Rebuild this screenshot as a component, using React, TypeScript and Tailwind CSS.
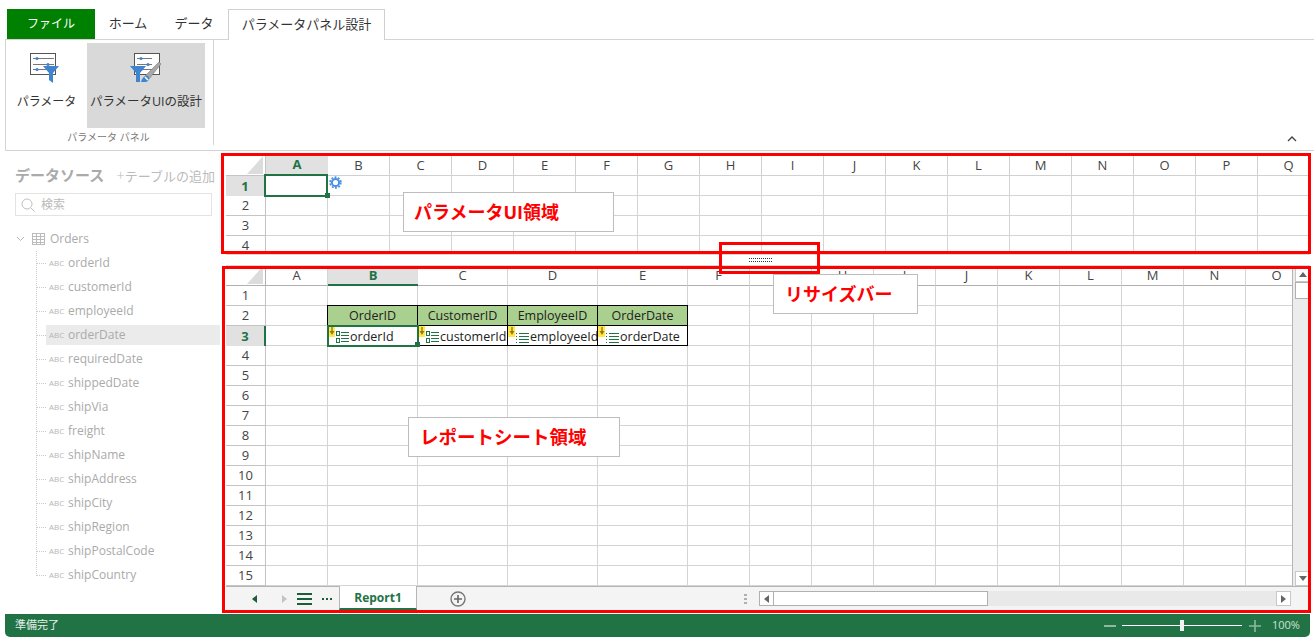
import React from "react";

const topCols = ["A","B","C","D","E","F","G","H","I","J","K","L","M","N","O","P","Q"];
const bottomCols = ["A","B","C","D","E","F","G","H","I","J","K","L","M","N","O"];
const fields = ["orderId","customerId","employeeId","orderDate","requiredDate","shippedDate","shipVia","freight","shipName","shipAddress","shipCity","shipRegion","shipPostalCode","shipCountry"];
const headers: Record<string,string> = { B:"OrderID", C:"CustomerID", D:"EmployeeID", E:"OrderDate" };
const binds: Record<string,[string,boolean]> = { B:["orderId",true], C:["customerId",true], D:["employeeId",false], E:["orderDate",false] };

function Corner() {
  return (
    <svg width="16" height="18" viewBox="0 0 16 18" className="absolute right-[2px] bottom-[1px]">
      <polygon points="16,0 16,18 0,18" fill="#dcdcdc" />
    </svg>
  );
}

function PanelIcon({ flip }: { flip?: boolean }) {
  return (
    <svg width="36" height="32" viewBox="0 0 36 32">
      <rect x={flip ? 6.5 : 1.5} y="1.5" width="25" height="21" fill="#fff" stroke="#555" />
      <g stroke="#777">
        <path d={flip ? "M9 6.5h15M9 12.5h15M9 17.5h15" : "M4 6.5h21M4 12.5h21M4 17.5h21"} />
      </g>
      <g fill="#3f84cf">
        <circle cx={flip ? 13 : 8} cy="6.5" r="1.6" />
        <circle cx={flip ? 20 : 19} cy="12.5" r="1.6" />
        <circle cx={flip ? 13 : 8} cy="17.5" r="1.6" />
      </g>
      {flip ? (
        <>
          <polygon points="2,14 18,14 12,21 12,30 8,30 8,21" fill="#3f84cf" />
          <path d="M17 24 L31 10 L33 12 L21 27 Z" fill="#a8a8a8" stroke="#777" strokeWidth="0.6" />
          <path d="M13 30 C14 26 17 23 20 24 C22 26 21 29 18 30 Z" fill="#3f84cf" />
          <path d="M17 25 L20 28" stroke="#fff" strokeWidth="1.5" />
        </>
      ) : (
        <polygon points="14,14 30,14 24,21 24,31 20,28 20,21" fill="#3f84cf" />
      )}
    </svg>
  );
}

function FieldIcon({ squares }: { squares: boolean }) {
  return squares ? (
    <svg width="13" height="12" viewBox="0 0 13 12" className="shrink-0">
      <g fill="none" stroke="#217346">
        <rect x="0.5" y="0.5" width="3" height="4" />
        <rect x="0.5" y="7.5" width="3" height="4" />
        <path d="M5 1.5h8M5 4.5h8M5 7.5h8M5 10.5h8" />
      </g>
    </svg>
  ) : (
    <svg width="13" height="12" viewBox="0 0 13 12" className="shrink-0 mt-[1px]">
      <g stroke="#217346">
        <path d="M3 1.5h10M3 4.5h10M3 7.5h10M3 10.5h10" />
        <path d="M0 1.5h2M0 4.5h2M0 7.5h2M0 10.5h2" strokeDasharray="1 1" />
      </g>
    </svg>
  );
}

function BindTag() {
  return (
    <span className="absolute left-0 top-0 w-[7px] h-[11px] bg-[#ffe84d] flex justify-center">
      <svg width="6" height="10" viewBox="0 0 6 10">
        <path d="M3 1v5" stroke="#9a7a10" strokeWidth="1.4" />
        <polygon points="0.5,5 5.5,5 3,9" fill="#9a7a10" />
      </svg>
    </span>
  );
}

function TopSheet() {
  return (
    <div className="w-[1082px] h-[98px] overflow-hidden">
      <div className="grid grid-cols-[40px_repeat(17,62px)] auto-rows-[20px] w-[1094px]">
        <div className="relative border-r border-b border-[#c4c4c4]"><Corner /></div>
        {topCols.map((c) => (
          <div key={c} className={c === "A"
            ? "flex items-center justify-center bg-[#e1e1e1] border-b-2 border-[#217346] text-[#217346] font-bold text-[13px]"
            : "flex items-center justify-center border-r border-b border-[#d0d0d0] text-[#444] text-[13px]"}>{c}</div>
        ))}
        {[1,2,3,4].map((r) => (
          <React.Fragment key={r}>
            <div className={r === 1
              ? "flex items-center justify-center pt-[1px] bg-[#e1e1e1] border-r-2 border-[#217346] text-[#217346] font-bold text-[13px]"
              : "flex items-center justify-center pt-[1px] border-r border-b border-[#c4c4c4] text-[#444] text-[13px]"}>{r}</div>
            {topCols.map((c) => (
              <div key={c} className="relative border-r border-b border-[#d4d4d4]">
                {r === 1 && c === "A" && (
                  <>
                    <div className="absolute -left-[2px] -top-[2px] w-[64px] h-[23px] border-2 border-[#217346] z-10" />
                    <div className="absolute left-[59px] top-[17px] w-[5px] h-[5px] bg-[#217346] z-10" />
                  </>
                )}
                {r === 1 && c === "B" && (
                  <svg width="13" height="13" viewBox="0 0 13 13" className="absolute left-[1px] top-0">
                    <circle cx="6.5" cy="6.5" r="3.6" fill="none" stroke="#4a90e2" strokeWidth="2" />
                    <circle cx="6.5" cy="6.5" r="5.4" fill="none" stroke="#4a90e2" strokeWidth="1.6" strokeDasharray="2 1.4" />
                  </svg>
                )}
              </div>
            ))}
          </React.Fragment>
        ))}
      </div>
    </div>
  );
}

function BottomSheet() {
  const rows = Array.from({ length: 15 }, (_, i) => i + 1);
  return (
    <div className="relative h-[320px] w-[1084px] overflow-hidden flex">
      <div className="w-[1067px] overflow-hidden border-r border-[#b5b5b5]">
        <div className="grid grid-cols-[40px_62px_repeat(4,90px)_repeat(10,62px)] auto-rows-[20px] w-[1100px]">
          <div className="relative border-r border-b border-[#b0b0b0]"><Corner /></div>
          {bottomCols.map((c) => (
            <div key={c} className={c === "B"
              ? "flex items-center justify-center pt-[1px] bg-[#e1e1e1] border-b-2 border-[#217346] text-[#217346] font-bold text-[13px]"
              : "flex items-center justify-center pt-[1px] border-r border-[#d6d6d6] border-b-[#b0b0b0] border-b text-[#444] text-[13px]"}>{c}</div>
          ))}
          {rows.map((r) => (
            <React.Fragment key={r}>
              <div className={r === 3
                ? "flex items-center justify-center pt-[1px] bg-[#e1e1e1] border-r-2 border-[#217346] text-[#217346] font-bold text-[13px]"
                : "flex items-center justify-center pt-[1px] border-r border-b border-[#c4c4c4] text-[#444] text-[13px]"}>{r}</div>
              {bottomCols.map((c) => {
                const isHead = r === 2 && headers[c];
                const isBind = r === 3 && binds[c];
                if (isHead) {
                  return (
                    <div key={c} className="flex items-center justify-center bg-[#a9d08e] border border-black -ml-px -mt-px w-[91px] h-[21px] text-[12.5px] text-[#222] pt-[2px]">{headers[c]}</div>
                  );
                }
                if (isBind) {
                  return (
                    <div key={c} className="relative flex items-center pl-[8px] pt-[3px] gap-[1px] bg-white border border-black -ml-px -mt-px w-[91px] h-[21px] text-[12.5px] text-[#222] overflow-visible whitespace-nowrap">
                      <BindTag />
                      <FieldIcon squares={binds[c][1]} />
                      <span className="block overflow-hidden">{binds[c][0]}</span>
                      {c === "B" && (
                        <>
                          <div className="absolute -left-px -top-px w-[92px] h-[22px] border-2 border-[#217346] z-10" />
                          <div className="absolute left-[87px] top-[16px] w-[5px] h-[5px] bg-[#217346] z-10" />
                        </>
                      )}
                    </div>
                  );
                }
                return <div key={c} className="border-r border-b border-[#d4d4d4]" />;
              })}
            </React.Fragment>
          ))}
        </div>
      </div>
      <div className="w-[17px] bg-[#ececec] flex flex-col items-center pl-[2px]">
        <div className="w-[15px] h-[16px] bg-white border border-[#c8c8c8] flex items-center justify-center">
          <svg width="8" height="5" viewBox="0 0 8 5"><polygon points="4,0 8,5 0,5" fill="#666" /></svg>
        </div>
        <div className="w-[15px] h-[17px] bg-white border border-[#b0b0b0]" />
        <div className="flex-1" />
        <div className="w-[15px] h-[15px] bg-white border border-[#c8c8c8] flex items-center justify-center">
          <svg width="8" height="5" viewBox="0 0 8 5"><polygon points="0,0 8,0 4,5" fill="#666" /></svg>
        </div>
      </div>
    </div>
  );
}

function SheetTabs() {
  return (
    <div className="h-[24px] w-[1084px] bg-[#f4f4f4] border-t border-[#b5b5b5] flex items-center relative">
      <svg width="6" height="8" viewBox="0 0 6 8" className="ml-[26px]"><polygon points="5,0 5,8 0,4" fill="#1b5e3a" /></svg>
      <svg width="6" height="8" viewBox="0 0 6 8" className="ml-[23px]"><polygon points="1,0 1,8 6,4" fill="#c4c4c4" /></svg>
      <div className="ml-[10px] w-[15px] flex flex-col gap-[3px]">
        <div className="h-[2px] bg-[#1b5e3a]" /><div className="h-[2px] bg-[#1b5e3a]" /><div className="h-[2px] bg-[#1b5e3a]" />
      </div>
      <div className="ml-[9px] w-[12px] flex justify-center gap-[2px]">
        <div className="w-[2px] h-[2px] bg-[#1b5e3a]" /><div className="w-[2px] h-[2px] bg-[#1b5e3a]" /><div className="w-[2px] h-[2px] bg-[#1b5e3a]" />
      </div>
      <div className="ml-[6px] w-[78px] h-[24px] -mt-px bg-white border-x border-[#b5b5b5] border-b-2 border-b-[#217346] flex items-center justify-center text-[12px] font-bold text-[#217346] pt-[1px]">Report1</div>
      <svg width="16" height="16" viewBox="0 0 16 16" className="ml-[33px]">
        <circle cx="8" cy="8" r="7" fill="none" stroke="#777" strokeWidth="1.4" />
        <path d="M8 4v8M4 8h8" stroke="#666" strokeWidth="1.6" />
      </svg>
      <div className="ml-[278px] w-[3px] flex flex-col gap-[2px]">
        <div className="h-[2px] bg-[#b0b0b0]" /><div className="h-[2px] bg-[#b0b0b0]" /><div className="h-[2px] bg-[#b0b0b0]" />
      </div>
      <div className="ml-[12px] w-[532px] h-[15px] bg-[#e9e9e9] flex">
        <div className="w-[15px] h-[15px] bg-white border border-[#b0b0b0] flex items-center justify-center">
          <svg width="5" height="8" viewBox="0 0 5 8"><polygon points="5,0 5,8 0,4" fill="#666" /></svg>
        </div>
        <div className="w-[214px] h-[15px] bg-white border border-[#b0b0b0] border-l-0" />
        <div className="flex-1" />
        <div className="w-[15px] h-[15px] bg-white border border-[#c8c8c8] flex items-center justify-center">
          <svg width="5" height="8" viewBox="0 0 5 8"><polygon points="0,0 0,8 5,4" fill="#666" /></svg>
        </div>
      </div>
    </div>
  );
}

function Sidebar() {
  return (
    <div className="w-[220px] h-[463px] pt-[13px] shrink-0">
      <div className="pl-[15px] flex items-baseline h-[22px]">
        <span className="text-[15px] font-bold text-[#aaa]">データソース</span>
        <span className="ml-[12px] text-[13px] text-[#bbb] whitespace-nowrap"><span className="text-[15px] font-light">+</span>テーブルの追加</span>
      </div>
      <div className="ml-[15px] mt-[7px] w-[197px] h-[23px] border border-[#e3e3e3] flex items-center pl-[5px] gap-[6px] text-[12px] text-[#bbb]">
        <svg width="14" height="14" viewBox="0 0 14 14" fill="none" stroke="#c0c0c0"><circle cx="6" cy="6" r="5" /><path d="M10 10l3.5 3.5" /></svg>
        検索
      </div>
      <div className="h-[22px] mt-[12px] pl-[15px] flex items-center text-[12px] text-[#aaa]">
        <svg width="9" height="6" viewBox="0 0 9 6" fill="none" stroke="#b5b5b5" className="ml-[1px]"><path d="M1 1l3.5 3.5L8 1" /></svg>
        <svg width="13" height="12" viewBox="0 0 13 12" fill="none" stroke="#bbb" className="ml-[7px]"><rect x="0.5" y="0.5" width="12" height="11" /><path d="M0.5 3.5h12M0.5 6.5h12M0.5 9.5h12M4.5 0.5v11M8.5 0.5v11" /></svg>
        <span className="ml-[5px]">Orders</span>
      </div>
      <div className="ml-[36px] mt-[1px] border-l border-dotted border-[#ccc] h-[325px] -mb-[325px]" />
      <div>
        {fields.map((f) => (
          <div key={f} className="h-[24px] flex items-center pl-[37px]">
            <span className="w-[9px] border-t border-dotted border-[#ccc]" />
            <span className={f === "orderDate"
              ? "flex-1 h-[20px] flex items-center bg-[#ebebeb] text-[12px] text-[#aaa]"
              : "flex-1 h-[20px] flex items-center text-[12px] text-[#aaa]"}>
              <span className="w-[22px] pl-[3px] text-[8px] text-[#b5b5b5]">ABC</span>
              {f}
            </span>
          </div>
        ))}
      </div>
    </div>
  );
}

export default function App() {
  return (
    <div className="relative w-[1314px] h-[639px] bg-white overflow-hidden font-['Open_Sans','Noto_Sans_CJK_JP',sans-serif]">
      <div className="h-[40px] pt-[9px] pl-[7px] flex text-[13px] text-[#333]">
        <div className="w-[88px] h-[30px] bg-[#008000] text-white text-[12px] flex items-center justify-center">ファイル</div>
        <div className="w-[66px] h-[30px] flex items-center justify-center">ホーム</div>
        <div className="w-[66px] h-[30px] flex items-center justify-center">データ</div>
        <div className="ml-[1px] w-[157px] h-[31px] bg-white border border-b-0 border-[#d0d0d0] flex items-center justify-center relative z-10">パラメータパネル設計</div>
      </div>
      <div className="-mt-px ml-[5px] h-[112px] border border-r-0 border-[#d4d4d4] flex relative">
        <div className="w-[208px] h-[105px] border-r border-[#d4d4d4] pt-[3px] flex flex-col">
          <div className="flex h-[85px]">
            <div className="w-[81px] flex flex-col items-center pt-[9px] text-[12px] text-[#333]">
              <PanelIcon />
              <span className="mt-[9px]">パラメータ</span>
            </div>
            <div className="w-[118px] bg-[#d9d9d9] flex flex-col items-center pt-[9px] text-[12.5px] text-[#333]">
              <PanelIcon flip />
              <span className="mt-[9px] whitespace-nowrap">パラメータUIの設計</span>
            </div>
          </div>
          <div className="text-[10px] text-[#777] text-center mt-[2px] pr-[2px]">パラメータ パネル</div>
        </div>
        <svg width="10" height="6" viewBox="0 0 10 6" fill="none" stroke="#444" strokeWidth="1.3" className="absolute right-[17px] bottom-[8px]"><path d="M1 5l4-4 4 4" /></svg>
      </div>
      <div className="flex h-[463px]">
        <Sidebar />
        <div className="pl-[6px] pt-[5px]">
          <TopSheet />
          <div className="h-[12px] w-[1084px] border-t border-b border-[#d8d8d8] flex items-center justify-center pr-[16px]">
            <div className="w-[23px] h-[4px] border-y border-dotted border-[#333]" />
          </div>
          <BottomSheet />
          <SheetTabs />
        </div>
      </div>
      <div className="ml-[5px] w-[1305px] h-[23px] bg-[#217346] rounded-b-[5px] flex items-center text-[11px] text-[#e8f0ea] pl-[10px]">
        準備完了
        <div className="ml-auto flex items-center pr-[10px]">
          <div className="w-[12px] h-[2px] bg-[#8fb8a0]" />
          <div className="ml-[6px] w-[120px] h-px bg-white relative">
            <div className="absolute left-[58px] -top-[5px] w-[4px] h-[11px] bg-[#f0f0f0]" />
          </div>
          <svg width="12" height="12" viewBox="0 0 12 12" className="ml-[7px]"><path d="M6 0v12M0 6h12" stroke="#8fb8a0" strokeWidth="1.6" /></svg>
          <span className="ml-[11px] w-[28px] text-[#cfe0d5]">100%</span>
        </div>
      </div>

      <div className="absolute left-[221px] top-[153px] w-[1090px] h-[101px] border-[3px] border-[#ff0000]" />
      <div className="absolute left-[222px] top-[266px] w-[1089px] h-[347px] border-[3px] border-[#ff0000]" />
      <div className="absolute left-[719px] top-[242px] w-[101px] h-[32px] border-[3px] border-[#ff0000]" />
      <div className="absolute left-[403px] top-[192px] w-[211px] h-[40px] bg-white border border-[#bdbdbd] flex items-center pl-[10px] text-[18px] font-bold text-[#ff0000]">パラメータUI領域</div>
      <div className="absolute left-[773px] top-[274px] w-[145px] h-[40px] bg-white border border-[#bdbdbd] flex items-center pl-[11px] text-[18px] font-bold text-[#ff0000]">リサイズバー</div>
      <div className="absolute left-[408px] top-[417px] w-[212px] h-[40px] bg-white border border-[#bdbdbd] flex items-center pl-[11px] text-[18.5px] font-bold text-[#ff0000]">レポートシート領域</div>
    </div>
  );
}
